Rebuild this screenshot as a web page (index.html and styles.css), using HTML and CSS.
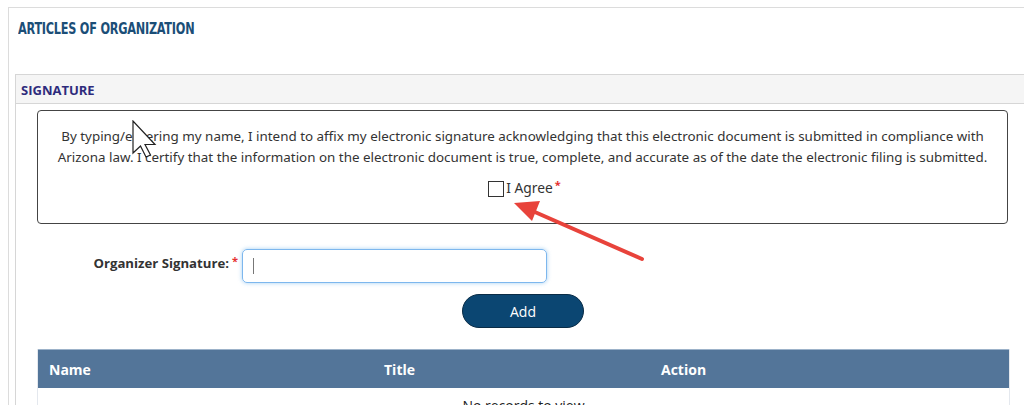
FILE: index.html
```html
<!DOCTYPE html>
<html>
<head>
<meta charset="utf-8">
<link rel="stylesheet" href="styles.css">
</head>
<body>
<div class="page">
  <div class="outer">
    <h1 class="title"><span class="title-text">ARTICLES OF ORGANIZATION</span></h1>
    <div class="inner">
      <div class="inner-head">SIGNATURE</div>
      <div class="inner-body">
        <div class="notice">
          <p>By typing/entering my name, I intend to affix my electronic signature acknowledging that this electronic document is submitted in compliance with Arizona law. I certify that the information on the electronic document is true, complete, and accurate as of the date the electronic filing is submitted.</p>
          <label class="agree"><span class="box"></span><span>I Agree</span><span class="req">*</span></label>
        </div>
        <div class="sig-row">
          <div class="sig-label">Organizer Signature:<span class="req">*</span></div>
          <div class="sig-input"><span class="caret"></span></div>
        </div>
        <div class="btn-row"><button class="add">Add</button></div>
        <div class="table">
          <div class="thead">
            <div class="th">Name</div>
            <div class="th">Title</div>
            <div class="th">Action</div>
          </div>
          <div class="empty">No records to view</div>
        </div>
      </div>
    </div>
  </div>
  <svg class="arrow" width="140" height="70" viewBox="0 0 140 70">
    <line x1="132" y1="62" x2="18" y2="12" stroke="#e8433b" stroke-width="4" stroke-linecap="round"/>
    <polygon points="4,6 30,4 22,24" fill="#e8433b"/>
  </svg>
  <svg class="cursor" width="30" height="40" viewBox="0 0 30 40">
    <polygon points="1,1 1,33 8.5,26 14,37 18.5,35 13,24.5 23,24.5" fill="#fff" stroke="#222" stroke-width="1.2" stroke-linejoin="miter"/>
  </svg>
</div>
</body>
</html>
```
FILE: styles.css
```css
html, body {
  margin: 0;
  padding: 0;
  overflow: hidden;
  background: #fff;
}
body {
  font-family: "Open Sans", "Noto Sans", sans-serif;
  color: #333;
}
.page {
  position: relative;
  width: 1024px;
  height: 405px;
  overflow: hidden;
}
.outer {
  margin: 7px 0 0 8px;
  width: 1100px;
  height: 420px;
  border: 1px solid #dcdcdc;
}
.title {
  margin: 0;
  padding: 12px 0 0 9px;
  height: 53px;
  box-sizing: border-box;
  font-family: "DejaVu Sans Condensed", "DejaVu Sans", sans-serif;
  font-weight: bold;
  font-size: 15.5px;
  letter-spacing: -0.3px;
  color: #1b4e77;
}
.title-text {
  display: inline-block;
  transform: scaleX(0.81);
  transform-origin: left center;
}
.inner {
  margin: 13px 0 0 6px;
  border: 1px solid #d6d6d6;
  height: 400px;
}
.inner-head {
  height: 29px;
  background: #f5f5f5;
  border-bottom: 1px solid #d6d6d6;
  box-sizing: border-box;
  padding: 6px 0 0 5px;
  font-weight: bold;
  font-size: 13px;
  color: #2e2b7c;
}
.inner-body {
  padding: 6px 0 0 21px;
}
.notice {
  width: 971px;
  height: 114px;
  box-sizing: border-box;
  border: 1px solid #444;
  border-radius: 4px;
  padding: 15px 10px 0;
  text-align: center;
}
.notice p {
  margin: 0;
  font-family: "Noto Sans", "Open Sans", sans-serif;
  font-size: 13.4px;
  line-height: 21px;
  color: #333;
}
.agree {
  display: inline-flex;
  align-items: center;
  margin-top: 9px;
  font-family: "Noto Sans", sans-serif;
  font-size: 13.8px;
  color: #333;
  margin-left: 4px;
}
.box {
  width: 14px;
  height: 14px;
  border: 1.5px solid #333;
  margin-right: 2px;
  margin-top: 4px;
}
.req {
  color: #e53030;
  font-weight: bold;
  font-size: 11px;
  align-self: flex-start;
  margin-left: 2px;
}
.sig-row {
  display: flex;
  align-items: flex-start;
  margin-top: 25px;
}
.sig-label {
  width: 201px;
  text-align: right;
  padding-top: 4px;
  font-weight: bold;
  font-size: 13.2px;
  color: #333;
}
.sig-label .req {
  margin-left: 3px;
  font-size: 11px;
  vertical-align: 3px;
}
.sig-input {
  margin-left: 4px;
  width: 305px;
  height: 34px;
  box-sizing: border-box;
  border: 1px solid #7db7ee;
  border-radius: 5px;
  box-shadow: 0 0 4px rgba(102, 175, 233, 0.6);
  padding: 8px 0 0 10px;
}
.caret {
  display: block;
  width: 1px;
  height: 16px;
  background: #777;
}
.btn-row {
  display: flex;
  padding-left: 425px;
  margin-top: 11px;
}
.add {
  width: 122px;
  height: 34px;
  border: 1px solid #0a2c46;
  border-radius: 17px;
  background: #0b4672;
  color: #fff;
  font-family: "Open Sans", sans-serif;
  font-size: 14px;
  padding: 0;
}
.table {
  width: 971px;
  margin-top: 21px;
  border: 1px solid #e4e8ee;
  border-top: none;
}
.thead {
  display: grid;
  grid-template-columns: 335px 277px 1fr;
  height: 39px;
  background: #537599;
  border-top: 1px solid #9cb2c9;
  box-sizing: border-box;
  align-items: center;
}
.th {
  padding-left: 11px;
  color: #fff;
  font-weight: bold;
  font-size: 14px;
}
.empty {
  text-align: center;
  padding-top: 8px;
  height: 30px;
  font-size: 14px;
  color: #222;
}
.arrow {
  position: absolute;
  left: 510px;
  top: 197px;
}
.cursor {
  position: absolute;
  left: 132px;
  top: 120px;
}
```
